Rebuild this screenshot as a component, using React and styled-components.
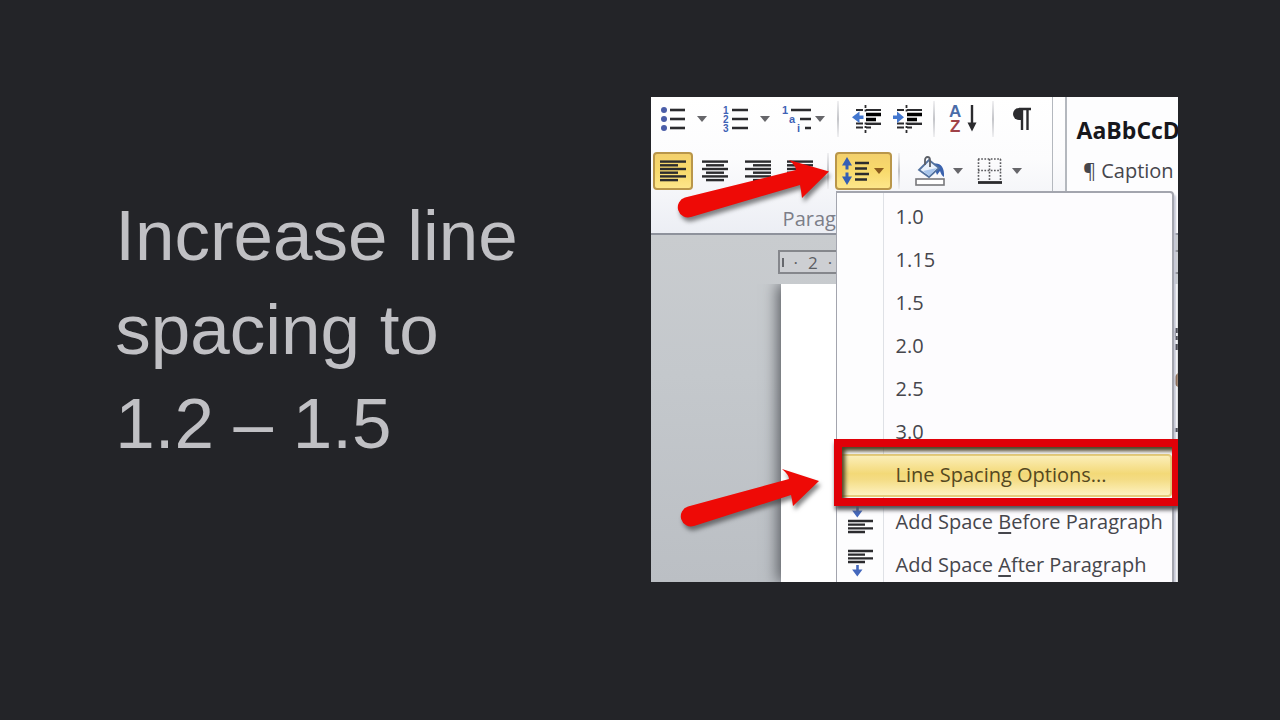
import styled, { createGlobalStyle, css } from "styled-components";

const ink = "#2b2b2e";
const blue = "#3f62b5";

const App = () => {
  return (
    <>
      <GlobalStyle />
      <Slide>
        <Headline>
          Increase line
          <br />
          spacing to
          <br />
          1.2 – 1.5
        </Headline>
        <Screenshot>
          <Ribbon>
            <Group>
              <ToolRow>
                <Tool $width={62} $gap={11} aria-label="Bullets">
                  <BulletsIcon />
                  <Caret />
                </Tool>
                <Tool $width={62} $gap={12} aria-label="Numbering">
                  <NumberingIcon />
                  <Caret />
                </Tool>
                <Tool $width={54} $gap={1} aria-label="Multilevel list">
                  <MultilevelIcon />
                  <Caret />
                </Tool>
                <Divider />
                <Tool $width={44} aria-label="Decrease indent">
                  <IndentIcon />
                </Tool>
                <Tool $width={38} aria-label="Increase indent">
                  <IndentIcon increase />
                </Tool>
                <Divider />
                <Tool $width={45} aria-label="Sort">
                  <SortIcon />
                </Tool>
                <Divider />
                <Tool $width={44} aria-label="Show marks">
                  <PilcrowIcon />
                </Tool>
              </ToolRow>
              <ToolRow>
                <Tool $width={40} $active aria-label="Align left">
                  <AlignIcon align="left" />
                </Tool>
                <Tool $width={44} aria-label="Center">
                  <AlignIcon align="center" />
                </Tool>
                <Tool $width={42} aria-label="Align right">
                  <AlignIcon align="right" />
                </Tool>
                <Tool $width={42} aria-label="Justify">
                  <AlignIcon align="justify" />
                </Tool>
                <Divider />
                <Tool $width={57} $gap={3} $active aria-label="Line spacing">
                  <SpacingIcon />
                  <Caret color="#8a5a1c" />
                </Tool>
                <Divider />
                <Tool $width={67} $gap={8} aria-label="Shading">
                  <ShadingIcon />
                  <Caret />
                </Tool>
                <Tool $width={54} $gap={10} aria-label="Borders">
                  <BordersIcon />
                  <Caret />
                </Tool>
              </ToolRow>
              <GroupLabel>Paragraph</GroupLabel>
            </Group>
            <Gallery>
              <StyleCard>
                <strong>AaBbCcD</strong>
                <span>¶ Caption</span>
              </StyleCard>
            </Gallery>
          </Ribbon>
          <Workspace>
            <Ruler>
              <i />
              <span>·</span>
              <span>2</span>
              <span>·</span>
            </Ruler>
            <Page>
              <PageMarks />
            </Page>
          </Workspace>
          <Menu>
            {spacings.map((value) => (
              <MenuItem key={value}>
                <Gutter />
                <span>{value}</span>
              </MenuItem>
            ))}
            <MenuItem $highlighted>
              <Gutter />
              <span>Line Spacing Options...</span>
              <Callout />
            </MenuItem>
            <MenuRule />
            <MenuItem>
              <Gutter>
                <SpaceIcon />
              </Gutter>
              <span>
                Add Space <u>B</u>efore Paragraph
              </span>
            </MenuItem>
            <MenuItem>
              <Gutter>
                <SpaceIcon after />
              </Gutter>
              <span>
                Add Space <u>A</u>fter Paragraph
              </span>
            </MenuItem>
          </Menu>
          <Arrows />
        </Screenshot>
      </Slide>
    </>
  );
};

const spacings = ["1.0", "1.15", "1.5", "2.0", "2.5", "3.0"];

//icons
const Caret = ({ color = "#66666a" }) => (
  <svg width="10" height="6" viewBox="0 0 10 6">
    <path d="M0 0h10L5 6z" fill={color} />
  </svg>
);

const BulletsIcon = () => (
  <svg width="25" height="24" viewBox="0 0 25 24">
    {[3, 12, 21].map((y) => (
      <g key={y}>
        <circle cx="3" cy={y} r="3" fill="#4a5da8" />
        <path d={`M9 ${y}h15`} stroke={ink} strokeWidth="2.6" />
      </g>
    ))}
  </svg>
);

const NumberingIcon = () => (
  <svg width="26" height="28" viewBox="0 0 26 28">
    <g
      fill={blue}
      fontFamily="Liberation Sans"
      fontWeight="700"
      fontSize="10"
    >
      <text x="1" y="9">1</text>
      <text x="1" y="18">2</text>
      <text x="1" y="27">3</text>
    </g>
    <path d="M10 5h16M10 14h16M10 23h16" stroke={ink} strokeWidth="2.6" />
  </svg>
);

const MultilevelIcon = () => (
  <svg width="32" height="28" viewBox="0 0 32 28">
    <g
      fill={blue}
      fontFamily="Liberation Sans"
      fontWeight="700"
      fontSize="11"
    >
      <text x="0" y="9">1</text>
      <text x="7" y="18">a</text>
      <text x="15" y="27">i</text>
    </g>
    <path d="M9 5h20M18 14h11M23 23h6" stroke={ink} strokeWidth="2.6" />
  </svg>
);

const IndentIcon = ({ increase }) => (
  <svg width="30" height="28" viewBox="0 0 30 28">
    <path
      d="M4 5h7M4 18.500h7M4 22.500h7M14 22.500h5M14 5h15"
      stroke={ink}
      strokeWidth="2.2"
    />
    <path d="M14 9.500h15M14 14.500h10" stroke="#000" strokeWidth="3.6" />
    <path d="M14 18.800h15" stroke={ink} strokeWidth="2.4" />
    <path
      d="M13.500 0v3M13.500 4.500v2M13.500 17.500v2M13.500 21v2M13.500 25v3"
      stroke={ink}
      strokeWidth="1.8"
    />
    <path
      d={
        increase
          ? "M0 10.500h4V6.500l7 5.800L4 18v-4H0z"
          : "M11.500 10.500h-4V6.500L0 12.300 7.500 18v-4h4z"
      }
      fill="#4377cf"
    />
  </svg>
);

const SortIcon = () => (
  <svg width="28" height="30" viewBox="0 0 28 30">
    <g fontFamily="Liberation Sans" fontWeight="700" fontSize="17">
      <text x="0" y="13" fill="#4a6ca8">A</text>
      <text x="1" y="28" fill="#a04248">Z</text>
    </g>
    <path d="M23 1v20" stroke={ink} strokeWidth="2.4" />
    <path d="M18.500 18.500h9L23 27.500z" fill={ink} />
  </svg>
);

const PilcrowIcon = () => (
  <svg width="19" height="24" viewBox="0 0 19 24">
    <path d="M11 1H7a6 6 0 0 0 0 12h4z" fill={ink} />
    <path d="M7 2h12M10 2v21M15.500 2v21" stroke={ink} strokeWidth="2.4" />
  </svg>
);

const alignLines = {
  left: [[0, 26], [0, 18], [0, 26], [0, 18], [0, 26], [0, 18]],
  center: [[0, 26], [4, 22], [0, 26], [4, 22], [0, 26], [4, 22]],
  right: [[0, 26], [8, 26], [0, 26], [8, 26], [0, 26], [8, 26]],
  justify: [[0, 26], [0, 26], [0, 26], [0, 26], [0, 26], [0, 26]],
};

const AlignIcon = ({ align }) => (
  <svg width="26" height="22" viewBox="0 0 26 22">
    {alignLines[align].map(([from, to], i) => (
      <path
        key={i}
        d={`M${from} ${i * 3.7 + 1.6}H${to}`}
        stroke={ink}
        strokeWidth="2.4"
      />
    ))}
  </svg>
);

const SpacingIcon = () => (
  <svg width="29" height="28" viewBox="0 0 29 28">
    <path
      d="M5 0l5 8.500H6.500v4h-3v-4H0zM5 28l5-8.500H6.500v-4h-3v4H0z"
      fill="#355fb4"
    />
    <path
      d="M13 6h14M13 11.500h12M13 17h14M13 22.500h12"
      stroke={ink}
      strokeWidth="2.6"
    />
  </svg>
);

const ShadingIcon = () => (
  <svg width="30" height="30" viewBox="0 0 30 30">
    <path d="M18 8c6-2 12 2 11 13-2-1-3-3-4-6l-3 4z" fill="#3a62ae" />
    <path
      d="M4 14L14 4l10 8-10 9z"
      fill="#eaf2fc"
      stroke="#53729f"
      strokeWidth="1.8"
    />
    <path d="M8 15l14-3-8 8z" fill="#a9c6ec" />
    <path
      d="M10 9V4c0-4 5-4 5 0v7"
      stroke="#5c6068"
      strokeWidth="1.8"
      fill="none"
    />
    <rect
      x="1"
      y="23"
      width="28"
      height="6"
      fill="#fff"
      stroke="#77777b"
      strokeWidth="1.6"
    />
  </svg>
);

const BordersIcon = () => (
  <svg width="25" height="26" viewBox="0 0 25 26">
    <path
      d="M1 1h23M1 12.500h23M1.500 1v21M12.500 1v21M23.500 1v21"
      stroke="#5a5a5e"
      strokeWidth="1.6"
      strokeDasharray="1.7 1.5"
      fill="none"
    />
    <path d="M1 24.500h24" stroke={ink} strokeWidth="2.8" />
  </svg>
);

const SpaceIcon = ({ after }) => (
  <svg width="26" height="32" viewBox="0 0 26 32">
    <path
      d="M1 2h25M1 5.700h17M1 9.400h25M1 13h17"
      stroke={ink}
      strokeWidth="2.3"
      transform={after ? "translate(0 1)" : "translate(0 14)"}
    />
    <path
      d="M9.200 0h2.600v4.500H15.500l-5.200 7-5.200-7h4.100z"
      fill="#4468bd"
      transform={after ? "translate(0 17)" : "translate(0 1)"}
    />
  </svg>
);

// slivers of the page text that show beside the menu
const PageMarks = () => (
  <svg width="4" height="160" viewBox="0 0 4 160">
    <path d="M1 44h3v5H2v3h2v4H1v-3h-1v-6h1zM1 60h3v6H1z" fill="#23232c" />
    <path d="M4 89v14c-5-2-5-11 0-14z" fill="#7a5230" />
    <path d="M0 144h4v4H0z" fill="#23232c" />
  </svg>
);

const Arrows = () => (
  <Overlay viewBox="0 0 527 485">
    <path d="M34 100.500L145 73Q145 69 138 63L178 74.500 151 101Q150 93 149 88L40 120A10 10 0 0 1 34 100.500z" />
    <path d="M37 409.500L138 382Q138 378 131 372L168 384 142 409Q141 402 140 398L43 429A10 10 0 0 1 37 409.500z" />
  </Overlay>
);

//styled components
const GlobalStyle = createGlobalStyle`
  * {
    margin: 0;
    padding: 0;
    box-sizing: border-box;
  }
  body {
    background: #232428;
    font-family: "Liberation Sans", Arial, sans-serif;
  }
  button {
    font: inherit;
    color: inherit;
    border: none;
    background: none;
    cursor: pointer;
  }
  svg {
    display: block;
    flex: none;
    overflow: visible;
  }
`;
const Slide = styled.main`
  min-height: 100vh;
  padding: 97px 8% 97px 9%;
  display: flex;
  justify-content: space-between;
  align-items: flex-start;
`;
const Headline = styled.h1`
  padding-top: 92px;
  font-size: 71px;
  line-height: 94px;
  font-weight: 400;
  color: #c0c0c4;
`;
const Screenshot = styled.section`
  position: relative;
  flex: 0 1 527px;
  overflow: hidden;
  background: #c4c8cc;
  font-family: "Open Sans", "Noto Sans", sans-serif;
  font-size: 20px;
  font-weight: 500;
  color: #46464c;
`;
const Ribbon = styled.div`
  display: flex;
  gap: 12px;
  background: linear-gradient(#fff 0%, #fcfcfd 45%, #eceef4 100%);
  border-bottom: 2px solid #8e929c;
`;
const Group = styled.div`
  flex: 0 0 402px;
  padding: 3px 2px 0;
  border-right: 1px solid #b4b8be;
`;
const ToolRow = styled.div`
  display: flex;
  align-items: center;
  height: 38px;
  margin-bottom: 14px;
`;
const Tool = styled.button`
  display: flex;
  flex: none;
  align-items: center;
  justify-content: center;
  gap: ${({ $gap }) => $gap || 0}px;
  width: ${({ $width }) => $width}px;
  height: 38px;
  ${({ $active }) =>
    $active &&
    css`
      border: 2px solid #b9964a;
      border-radius: 4px;
      background: linear-gradient(#f3d06c, #f8da6c 50%, #fde68a);
    `}
`;
const Divider = styled.span`
  width: 2px;
  height: 36px;
  margin: 0 6px;
  background: linear-gradient(#f0f0f2, #c4c5c9 50%, #f0f0f2);
`;
const GroupLabel = styled.p`
  padding: 0 130px;
  line-height: 29px;
  color: #7c7e88;
`;
const Gallery = styled.div`
  flex: 1;
  overflow: hidden;
  background: #fdfdfe;
  border-left: 2px solid #b4b8be;
`;
const StyleCard = styled.button`
  display: flex;
  flex-direction: column;
  padding: 18px 10px;
  line-height: 30px;
  white-space: nowrap;
  strong {
    font-size: 23px;
    font-weight: 700;
    color: #17171c;
  }
  span {
    padding: 11px 6px 0;
  }
`;
const Workspace = styled.div`
  padding: 15px 0 0 127px;
  background: linear-gradient(#c9cccf, #c4c8cc 40%, #bbbfc4);
`;
const Ruler = styled.div`
  display: flex;
  align-items: center;
  gap: 10px;
  height: 24px;
  padding-left: 2px;
  border: 2px solid #85878c;
  border-right: none;
  background: #cdcfd3;
  font-size: 17px;
  color: #5c5e63;
  i {
    width: 2px;
    height: 9px;
    background: #66686d;
  }
`;
const Page = styled.div`
  display: flex;
  justify-content: flex-end;
  height: 298px;
  margin: 10px 0 0 3px;
  background: #fff;
  box-shadow: -3px 0 14px #55585e;
  clip-path: inset(0 0 0 -24px);
`;
const Menu = styled.div`
  position: absolute;
  top: 94px;
  left: 185px;
  right: 4px;
  padding-top: 3px;
  border: 2px solid #a3a5ae;
  border-left-width: 1px;
  border-radius: 0 4px 0 0;
  background: linear-gradient(
    90deg,
    #fdfdfe 46px,
    #dfe1e6 46px,
    #dfe1e6 47px,
    #fdfcfe 47px
  );
  box-shadow: 2px 3px 2px #c6c8d6;
`;
const MenuItem = styled.button`
  position: relative;
  display: flex;
  align-items: center;
  width: 100%;
  height: 43px;
  padding-bottom: 3px;
  white-space: pre;
  u {
    text-underline-offset: 3px;
    text-decoration-thickness: 2px;
  }
  ${({ $highlighted }) =>
    $highlighted &&
    css`
      color: #54481f;
      border: 2px solid #e6cd7c;
      border-left-width: 0;
      border-radius: 4px;
      background: linear-gradient(#fbeeb8, #f3d978 45%, #f4dc84 60%, #fdf2c0);
    `}
`;
const Gutter = styled.span`
  display: flex;
  flex: none;
  justify-content: center;
  width: 46px;
  margin-right: 13px;
`;
const MenuRule = styled.hr`
  height: 4px;
  border: none;
`;
const Callout = styled.span`
  position: absolute;
  z-index: 1;
  inset: -17px -10px -11px -3px;
  border: 8px solid #e00008;
  box-shadow:
    inset 3px 4px 4px #4a4022,
    1px 4px 4px #55555a;
`;
const Overlay = styled.svg`
  position: absolute;
  inset: 0;
  width: 527px;
  height: 485px;
  fill: #ee0a06;
  filter: drop-shadow(2px 4px 2px #33333699);
  pointer-events: none;
`;
export default App;
